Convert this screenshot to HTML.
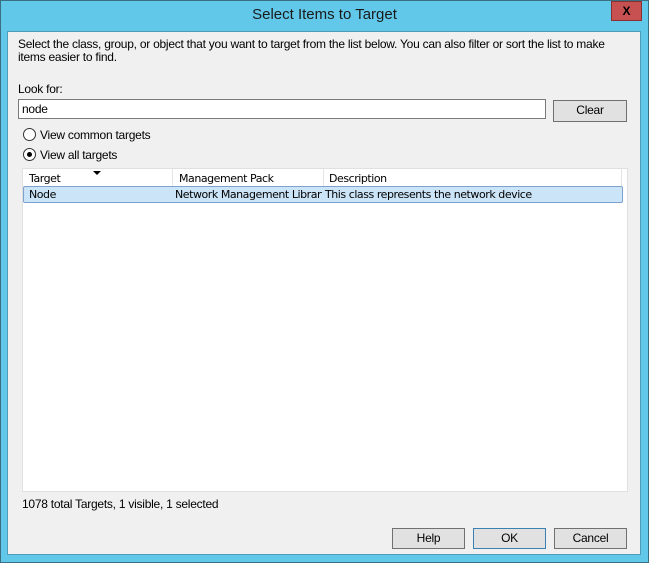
<!DOCTYPE html>
<html><head><style>
*{margin:0;padding:0;box-sizing:border-box}
body{width:649px;height:563px;background:#61c8ea;font-family:"Liberation Sans",sans-serif;font-size:12px;color:#000;position:relative;overflow:hidden}
.frame{position:absolute;left:0;top:0;width:649px;height:563px;border:1px solid #3a6e80}
.title{position:absolute;left:0;top:6px;width:649px;text-align:center;font-size:15px;color:#1a1a1a}
.close{position:absolute;left:611px;top:1px;width:31px;height:20px;background:#c75050;border:1px solid #8a3030;color:#000;font-weight:bold;font-size:12px;text-align:center;line-height:18px}
.client{position:absolute;left:7px;top:31px;width:634px;height:524px;background:#f0f0f0;border:1px solid #4f9cb8}
.a{position:absolute;white-space:nowrap}
.t{letter-spacing:-0.25px}
.g{font-family:'DejaVu Sans',sans-serif;font-size:11px;letter-spacing:-0.45px}
.btn{position:absolute;background:#e1e1e1;border:1px solid #707070;text-align:center;line-height:19px}
.radio{position:absolute;width:13px;height:13px;border:1px solid #333;border-radius:50%;background:#fff}
</style></head><body>
<div class="frame"></div>
<div class="title">Select Items to Target</div>
<div class="close">X</div>
<div class="client"></div>
<div class="a t" style="left:18px;top:38px;line-height:13px;white-space:normal;width:615px">Select the class, group, or object that you want to target from the list below. You can also filter or sort the list to make items easier to find.</div>
<div class="a t" style="left:18px;top:82px">Look for:</div>
<div class="a t" style="left:18px;top:99px;width:528px;height:20px;background:#fff;border:1px solid #7a7a7a;padding:2px 3px">node</div>
<div class="btn t" style="left:553px;top:100px;width:74px;height:22px">Clear</div>
<div class="radio" style="left:23px;top:128px"></div>
<div class="a t" style="left:40px;top:128px">View common targets</div>
<div class="radio" style="left:23px;top:148px"><div style="position:absolute;left:3px;top:3px;width:5px;height:5px;border-radius:50%;background:#000"></div></div>
<div class="a t" style="left:40px;top:148px">View all targets</div>
<div class="a" style="left:22px;top:168px;width:606px;height:324px;background:#fff;border:1px solid #e0e0e0"></div>
<div class="a g" style="left:23px;top:169px;width:150px;height:17px;border-right:1px solid #e5e5e5;padding:3px 6px">Target</div>
<div class="a" style="left:93px;top:171px;width:0;height:0;border-left:4px solid transparent;border-right:4px solid transparent;border-top:4px solid #000"></div>
<div class="a g" style="left:173px;top:169px;width:151px;height:17px;border-right:1px solid #e5e5e5;padding:3px 6px">Management Pack</div>
<div class="a g" style="left:324px;top:169px;width:298px;height:17px;border-right:1px solid #e5e5e5;padding:3px 5px">Description</div>
<div class="a" style="left:23px;top:186px;width:600px;height:17px;background:#cce4f7;border:1px solid #7da2ce;border-radius:2px"></div>
<div class="a g" style="left:29px;top:188px">Node</div>
<div class="a g" style="left:175px;top:188px;width:147px;overflow:hidden">Network Management Library</div>
<div class="a g" style="left:325px;top:188px">This class represents the network device</div>
<div class="a t" style="left:22px;top:497px">1078 total Targets, 1 visible, 1 selected</div>
<div class="btn t" style="left:392px;top:528px;width:73px;height:21px">Help</div>
<div class="btn t" style="left:473px;top:528px;width:73px;height:21px;border-color:#3c7fb1">OK</div>
<div class="btn t" style="left:554px;top:528px;width:73px;height:21px">Cancel</div>
</body></html>
